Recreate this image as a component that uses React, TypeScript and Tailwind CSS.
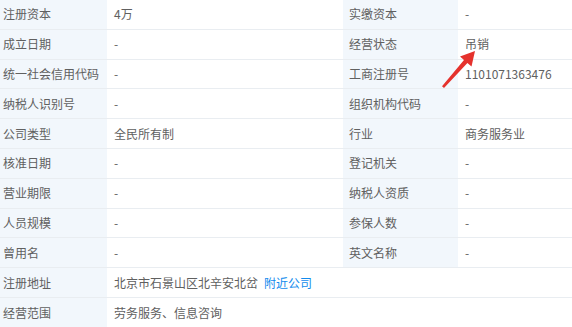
import React from 'react'

type Pair = [string, React.ReactNode]

const rows: { left: Pair; right?: Pair }[] = [
  { left: ['注册资本', '4万'], right: ['实缴资本', '-'] },
  { left: ['成立日期', '-'], right: ['经营状态', '吊销'] },
  { left: ['统一社会信用代码', '-'], right: ['工商注册号', '1101071363476'] },
  { left: ['纳税人识别号', '-'], right: ['组织机构代码', '-'] },
  { left: ['公司类型', '全民所有制'], right: ['行业', '商务服务业'] },
  { left: ['核准日期', '-'], right: ['登记机关', '-'] },
  { left: ['营业期限', '-'], right: ['纳税人资质', '-'] },
  { left: ['人员规模', '-'], right: ['参保人数', '-'] },
  { left: ['曾用名', '-'], right: ['英文名称', '-'] },
  {
    left: [
      '注册地址',
      <>
        北京市石景山区北辛安北岔
        <span className="ml-[6px] text-[#128bed]">附近公司</span>
      </>,
    ],
  },
  { left: ['经营范围', '劳务服务、信息咨询'] },
]

function Arrow() {
  return (
    <svg
      className="pointer-events-none absolute left-[440px] top-[48px]"
      width="40"
      height="42"
      viewBox="0 0 40 42"
    >
      <polygon
        points="35,3 31.5,18.6 27.4,15 4,40 2,38.2 24,12 20,8.6"
        fill="#e5322d"
      />
    </svg>
  )
}

export default function App() {
  return (
    <div
      className="relative h-[327px] w-[572px] overflow-hidden bg-white text-[12px] text-[#606060]"
      style={{ fontFamily: '"Noto Sans CJK SC", "Noto Sans", sans-serif' }}
    >
      <div className="grid grid-cols-[107px_236px_115px_1fr]">
        {rows.map((row, i) => {
          const last = i === rows.length - 1
          const line = last ? '' : 'border-b border-[#e9edf1]'
          return (
            <React.Fragment key={row.left[0]}>
              <div className={`flex h-[29.8px] items-center bg-[#f2f7fc] pl-[3px] ${line}`}>
                {row.left[0]}
              </div>
              <div
                className={`flex h-[29.8px] items-center pl-[7px] ${line} ${row.right ? '' : 'col-span-3'}`}
              >
                {row.left[1]}
              </div>
              {row.right && (
                <>
                  <div className={`flex h-[29.8px] items-center bg-[#f2f7fc] pl-[6px] ${line}`}>
                    {row.right[0]}
                  </div>
                  <div className={`flex h-[29.8px] items-center pl-[7px] ${line}`}>
                    {row.right[1]}
                  </div>
                </>
              )}
            </React.Fragment>
          )
        })}
      </div>
      <Arrow />
    </div>
  )
}
